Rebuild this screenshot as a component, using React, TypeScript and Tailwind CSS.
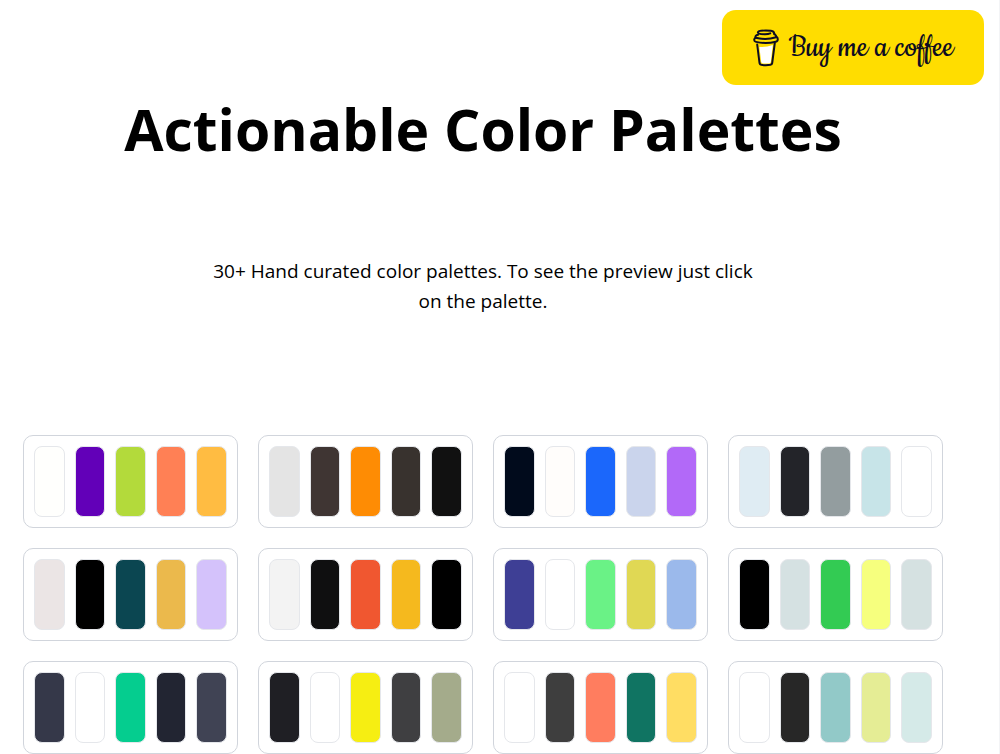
import React from "react";

const palettes: string[][] = [
  ["#fffffd", "#6200b8", "#b3da3b", "#ff8055", "#ffbc42"],
  ["#e4e4e4", "#3f3533", "#fe8c04", "#38322e", "#111111"],
  ["#010b1c", "#fffdfb", "#1b67fb", "#cad4ec", "#b269f8"],
  ["#dfecf3", "#232429", "#939d9f", "#c7e4e8", "#ffffff"],
  ["#ebe5e5", "#000000", "#0b4651", "#ebb94c", "#d4c2fb"],
  ["#f3f3f3", "#0f0f10", "#f05730", "#f5b91e", "#000000"],
  ["#3e3f95", "#ffffff", "#6af286", "#e0d854", "#9bb9eb"],
  ["#000000", "#d5e1e2", "#33cb53", "#f6ff7e", "#d5e1e1"],
  ["#353849", "#ffffff", "#05cd8f", "#222532", "#404354"],
  ["#1f1f24", "#ffffff", "#f6ee12", "#3f3f41", "#a4ab8b"],
  ["#ffffff", "#3e3e3e", "#ff7d5f", "#107462", "#ffdd63"],
  ["#ffffff", "#272727", "#92c9c8", "#e5ed95", "#d5eae8"],
];

const CoffeeCup: React.FC = () => (
  <svg viewBox="0 0 26 38" className="h-[38px] w-[26px]" fill="none" aria-hidden="true">
    <path
      d="M6.4 18Q13 18.4 19.8 16L17.8 33Q17.6 34.4 16 34.6H10Q8.4 34.4 8.2 33Z"
      fill="#fff"
    />
    <g stroke="#0d0c22" strokeWidth="2" strokeLinecap="round" strokeLinejoin="round">
      <path d="M4.2 15.5 6.5 34Q6.8 35.5 8.2 35.8Q13 36.5 17.4 35.8Q19 35.5 19.2 34L21.8 14" />
      <path d="M2.4 8.8Q1.1 9.6 1.2 11Q1.3 12.5 3 12.9Q13 15.1 22.8 12.7Q24.8 12.2 24.8 10.2Q24.8 8.6 23.5 7.8" />
      <path d="M5 5.8Q1.8 6.6 2.6 8.7Q13 11.3 23 8.3Q23.8 7 22 5.4" />
      <path d="M21.2 5.2Q21.4 2 18 1.7Q5 .8 4.8 3.5Q5 5.3 12 5.2Q15.4 5.2 17.2 4.4" />
    </g>
  </svg>
);

const Palette: React.FC<{ colors: string[] }> = ({ colors }) => (
  <button
    type="button"
    aria-label={`Preview palette ${colors.join(", ")}`}
    className="grid cursor-pointer grid-cols-5 gap-2.5 rounded-[10px] border border-gray-300 bg-white p-2.5 hover:shadow-md"
  >
    {colors.map((color, i) => (
      <span
        key={i}
        className="h-[71px] rounded-lg border border-gray-200"
        style={{ backgroundColor: color }}
      />
    ))}
  </button>
);

const App: React.FC = () => (
  <div className="min-h-screen border-r border-gray-100 bg-white font-['Open_Sans','Noto_Sans',sans-serif] text-black">
    <header className="flex justify-end pt-2.5 pr-[15px]">
      <a
        href="#coffee"
        className="flex h-[75px] w-[262px] items-center justify-center gap-2.5 rounded-[14px] bg-[#ffdd00]"
      >
        <CoffeeCup />
        <span className="whitespace-nowrap font-['Cookie','Liberation_Serif',cursive] text-[35px] leading-8 text-[#0d0c22]">
          Buy me a coffee
        </span>
      </a>
    </header>

    <main className="mr-[33px] px-[23px]">
      <h1 className="mt-2 text-center text-[57px] leading-[72px] font-bold">
        Actionable Color Palettes
      </h1>
      <p className="mx-auto mt-[91px] max-w-[560px] text-center text-[19px] leading-[30px]">
        30+ Hand curated color palettes. To see the preview just click on the palette.
      </p>

      <section className="mt-[119px] grid grid-cols-2 gap-5 md:grid-cols-4">
        {palettes.map((colors, i) => (
          <Palette key={i} colors={colors} />
        ))}
      </section>
    </main>
  </div>
);

export default App;
